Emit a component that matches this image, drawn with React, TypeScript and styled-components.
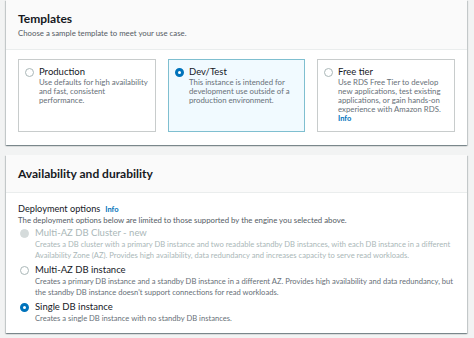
import React from "react";
import styled, { createGlobalStyle } from "styled-components";

const GlobalStyle = createGlobalStyle`
  html, body {
    margin: 0;
    padding: 0;
    background: #f2f3f3;
    font-family: Lato, "Noto Sans", sans-serif;
    color: #16191f;
  }
`;

const Page = styled.div`
  width: 474px;
  height: 338px;
  overflow: hidden;
  padding: 0 7px 0 6px;
  box-sizing: border-box;
  display: flex;
  flex-direction: column;
  gap: 10px;
`;

const Panel = styled.section`
  background: #fff;
  box-shadow: 0 1px 1px 0 rgba(0, 28, 36, 0.3), 1px 1px 1px 0 rgba(0, 28, 36, 0.15),
    -1px 1px 1px 0 rgba(0, 28, 36, 0.15);
`;

const PanelHeader = styled.header<{ $height: number }>`
  height: ${(p) => p.$height}px;
  box-sizing: border-box;
  background: #fafafa;
  border-bottom: 1px solid #eaeded;
  padding: 0 12px;
  display: flex;
  flex-direction: column;
  justify-content: center;
`;

const Title = styled.h2`
  margin: 0;
  font-size: 12px;
  font-weight: 700;
  line-height: 16px;
`;

const Subtitle = styled.p`
  margin: 1px 0 0;
  font-size: 7.8px;
  line-height: 10px;
  color: #545b64;
`;

const CardsBody = styled.div`
  height: 95px;
  box-sizing: border-box;
  padding: 9px 12px 0;
  display: grid;
  grid-template-columns: 138px 137px 138px;
  gap: 12px;
`;

const Card = styled.div<{ $selected?: boolean }>`
  height: 73px;
  box-sizing: border-box;
  border: 1px solid ${(p) => (p.$selected ? "#7fbfd0" : "#c8cccc")};
  background: ${(p) => (p.$selected ? "#f1faff" : "#fff")};
  padding: 6px 6px 0 6px;
  display: flex;
  gap: 5px;
`;

const Radio = styled.span<{ $checked?: boolean; $disabled?: boolean }>`
  flex: none;
  width: 9px;
  height: 9px;
  margin-top: 2px;
  box-sizing: border-box;
  border-radius: 50%;
  border: ${(p) =>
    p.$checked ? "3px solid #0073bb" : p.$disabled ? "1px solid #d5dbdb" : "1px solid #aab7b8"};
  background: ${(p) => (p.$disabled ? "#d5dbdb" : "#fff")};
`;

const OptionText = styled.div`
  display: flex;
  flex-direction: column;
`;

const OptionTitle = styled.span<{ $disabled?: boolean }>`
  font-size: 9.5px;
  line-height: 12px;
  color: ${(p) => (p.$disabled ? "#aab7b8" : "#16191f")};
`;

const OptionDesc = styled.span<{ $disabled?: boolean; $tight?: boolean }>`
  font-size: ${(p) => (p.$tight ? 7.8 : 7.6)}px;
  line-height: ${(p) => (p.$tight ? 9 : 10.5)}px;
  color: ${(p) => (p.$disabled ? "#aab7b8" : "#687078")};
  white-space: ${(p) => (p.$tight ? "normal" : "nowrap")};
`;

const InfoLink = styled.a`
  font-size: 7.5px;
  line-height: 9px;
  font-weight: 700;
  color: #0073bb;
  text-decoration: none;
`;

const Body = styled.div`
  padding: 10px 12px 0;
  height: 140px;
  box-sizing: border-box;
`;

const FieldLabel = styled.div`
  display: flex;
  align-items: baseline;
  gap: 5px;
  font-size: 9.2px;
  line-height: 12px;
`;

const FieldHint = styled.div`
  font-size: 7.8px;
  line-height: 11px;
  color: #545b64;
`;

const OptionList = styled.div`
  display: flex;
  flex-direction: column;
  gap: 4px;
  margin-top: 1px;
`;

const Option = styled.div`
  display: flex;
  gap: 6px;
  padding-left: 2px;
`;

const templates = [
  {
    title: "Production",
    desc: "Use defaults for high availability and fast, consistent performance.",
  },
  {
    title: "Dev/Test",
    desc: "This instance is intended for development use outside of a production environment.",
    selected: true,
  },
  {
    title: "Free tier",
    desc: "Use RDS Free Tier to develop new applications, test existing applications, or gain hands-on experience with Amazon RDS.",
    info: true,
  },
];

const deployments = [
  {
    title: "Multi-AZ DB Cluster - new",
    desc: [
      "Creates a DB cluster with a primary DB instance and two readable standby DB instances, with each DB instance in a different",
      "Availability Zone (AZ). Provides high availability, data redundancy and increases capacity to serve read workloads.",
    ],
    disabled: true,
  },
  {
    title: "Multi-AZ DB instance",
    desc: [
      "Creates a primary DB instance and a standby DB instance in a different AZ. Provides high availability and data redundancy, but",
      "the standby DB instance doesn't support connections for read workloads.",
    ],
  },
  {
    title: "Single DB instance",
    desc: ["Creates a single DB instance with no standby DB instances."],
    checked: true,
  },
];

export default function App() {
  return (
    <>
      <GlobalStyle />
      <Page>
        <Panel>
          <PanelHeader $height={50}>
            <Title>Templates</Title>
            <Subtitle>Choose a sample template to meet your use case.</Subtitle>
          </PanelHeader>
          <CardsBody>
            {templates.map((t) => (
              <Card key={t.title} $selected={t.selected}>
                <Radio $checked={t.selected} />
                <OptionText>
                  <OptionTitle>{t.title}</OptionTitle>
                  <OptionDesc $tight>{t.desc}</OptionDesc>
                  {t.info && <InfoLink href="#">Info</InfoLink>}
                </OptionText>
              </Card>
            ))}
          </CardsBody>
        </Panel>
        <Panel>
          <PanelHeader $height={38}>
            <Title>Availability and durability</Title>
          </PanelHeader>
          <Body>
            <FieldLabel>
              Deployment options <InfoLink href="#">Info</InfoLink>
            </FieldLabel>
            <FieldHint>
              The deployment options below are limited to those supported by the engine you selected above.
            </FieldHint>
            <OptionList>
              {deployments.map((d) => (
                <Option key={d.title}>
                  <Radio $checked={d.checked} $disabled={d.disabled} />
                  <OptionText>
                    <OptionTitle $disabled={d.disabled}>{d.title}</OptionTitle>
                    {d.desc.map((line) => (
                      <OptionDesc key={line} $disabled={d.disabled}>
                        {line}
                      </OptionDesc>
                    ))}
                  </OptionText>
                </Option>
              ))}
            </OptionList>
          </Body>
        </Panel>
      </Page>
    </>
  );
}
